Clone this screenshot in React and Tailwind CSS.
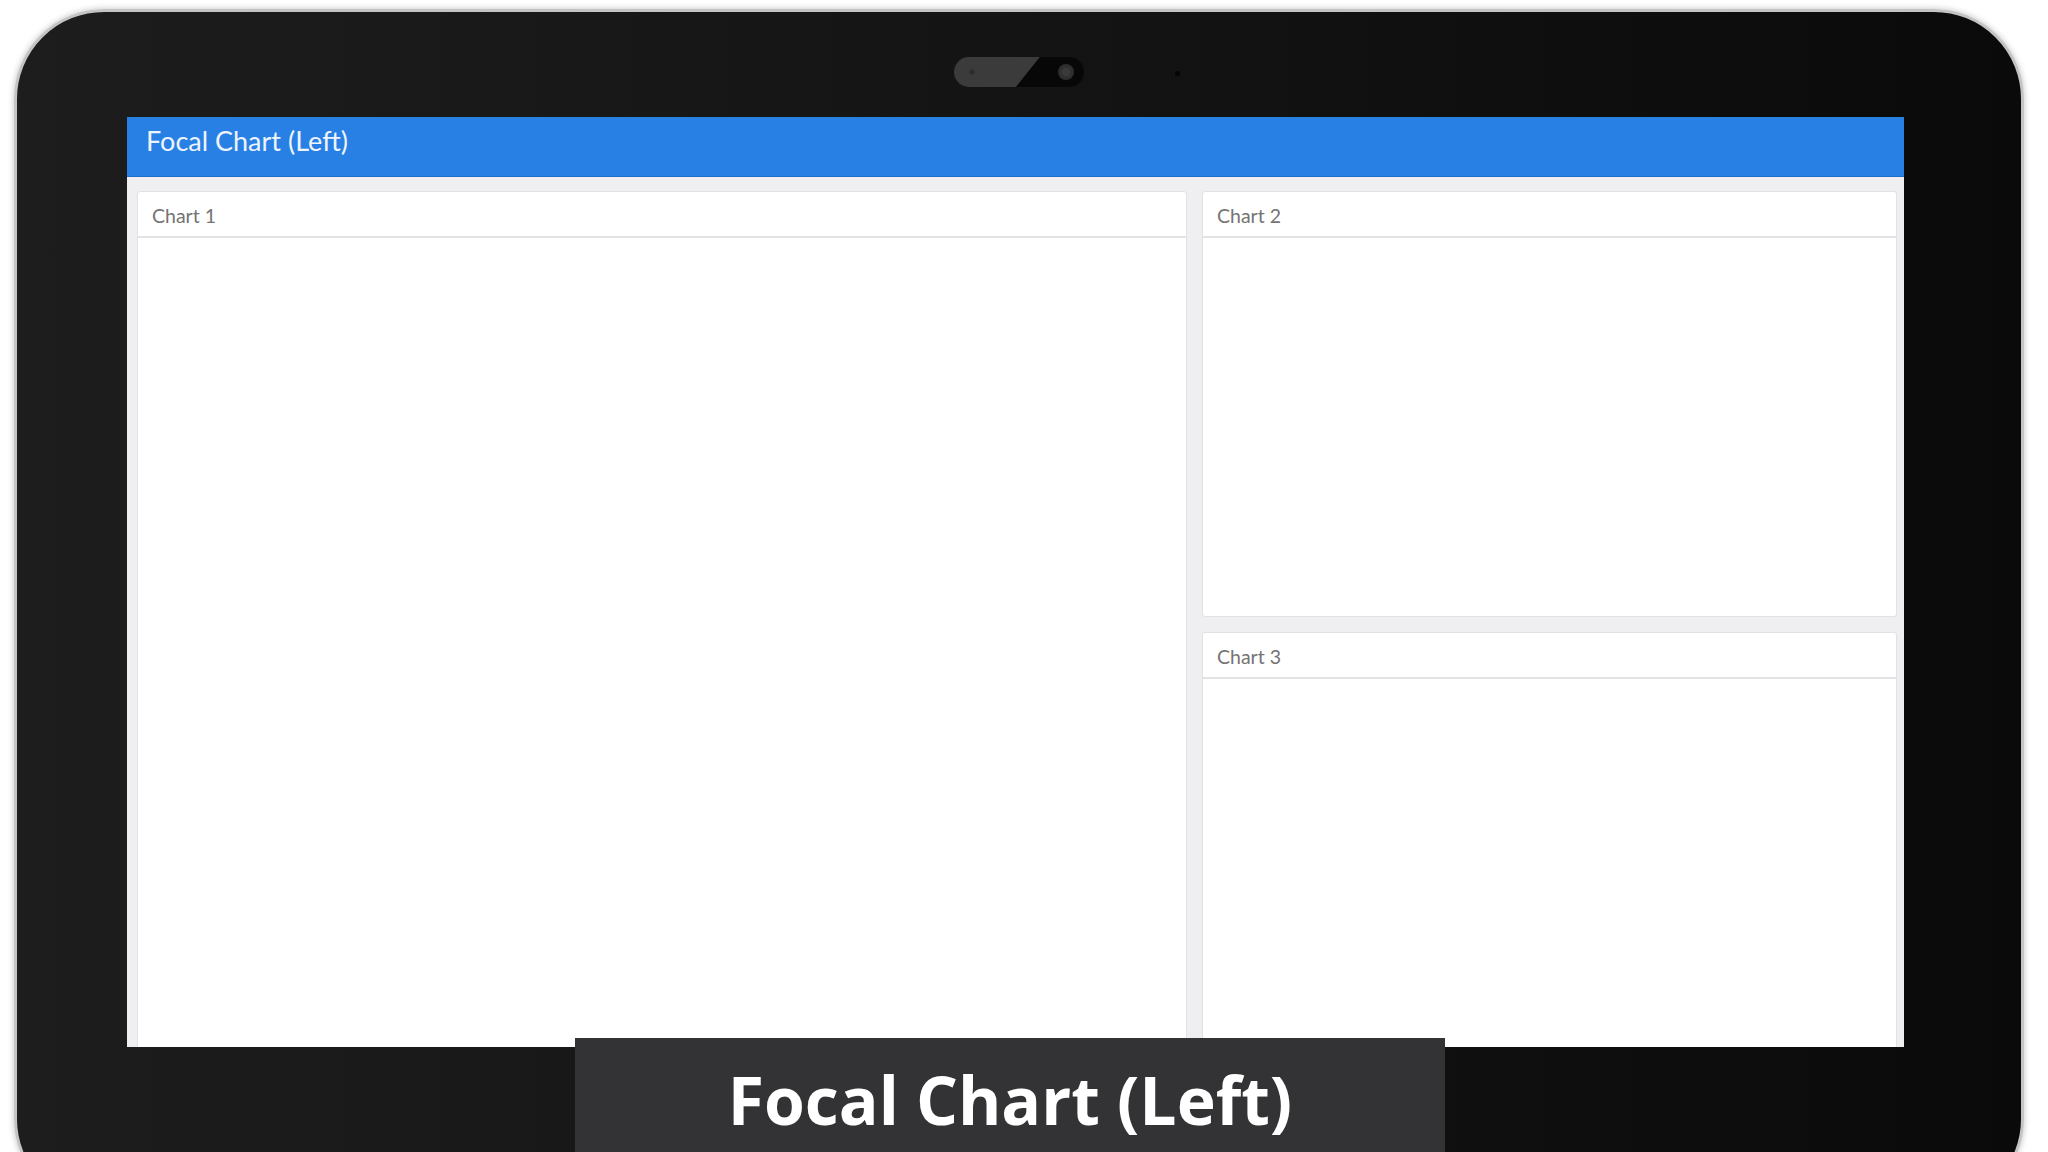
import React from 'react';

const Card = ({ title, className }) => (
  <div className={`flex flex-col rounded-[3px] border border-[#e2e2e4] bg-white ${className}`}>
    <div className="flex h-[46px] shrink-0 items-center border-b-2 border-[#e3e3e3] px-[14px] pt-[3px]">
      <span className="font-['Lato',sans-serif] text-[19.5px] text-[#747474]">{title}</span>
    </div>
    <div className="flex-1" />
  </div>
);

const Camera = () => (
  <svg width="134" height="34" viewBox="0 0 134 34" className="absolute left-[937px] top-[43px]">
    <path d="M15 2 H86 L62 32 H15 A15 15 0 0 1 15 2 Z" fill="#3b3b3c" />
    <path d="M86 2 H115 A15 15 0 0 1 115 32 H62 Z" fill="#070707" />
    <circle cx="18" cy="17" r="2.5" fill="#2c2c2c" />
    <circle cx="112" cy="17" r="8" fill="#2f2f30" />
    <circle cx="112" cy="17" r="4.5" fill="#3a3a3b" />
  </svg>
);

const App = () => {
  return (
    <div className="relative h-[1152px] w-[2048px] overflow-hidden bg-white">
      {/* device bezel */}
      <div className="relative ml-[14px] mt-[9px] h-[1200px] w-[2010px] rounded-[90px] border-[3px] border-[#c4c4c4] bg-gradient-to-r from-[#1d1d1e] via-[#141415] to-[#0a0a0a] pl-[110px] pt-[105px] shadow-[0_0_6px_rgba(0,0,0,0.25)]">
        <Camera />
        <div className="absolute left-[1158px] top-[59px] h-[5px] w-[5px] rounded-full bg-[#040404]" />

        {/* screen */}
        <div className="flex h-[930px] w-[1777px] flex-col overflow-hidden bg-[#efeff1]">
          <div className="flex h-[60px] shrink-0 items-center border-b border-[#1f6ecb] bg-[#2880e4] pb-[10px] pl-[19px]">
            <span className="font-['Lato',sans-serif] text-[27px] text-[#eef4fd]">Focal Chart (Left)</span>
          </div>
          <div className="flex gap-[15px] pl-[10px] pr-[7px] pt-[14px]">
            <Card title="Chart 1" className="h-[900px] w-[1050px]" />
            <div className="flex flex-1 flex-col gap-[15px]">
              <Card title="Chart 2" className="h-[426px]" />
              <Card title="Chart 3" className="h-[600px]" />
            </div>
          </div>
        </div>
      </div>

      {/* caption overlay */}
      <div className="absolute left-[575px] top-[1038px] h-[114px] w-[870px] bg-[#333335] pt-[28px] text-center">
        <span className="font-['Open_Sans',sans-serif] text-[66px] font-bold leading-none text-white">
          Focal Chart (Left)
        </span>
      </div>
    </div>
  );
};

export default App;
